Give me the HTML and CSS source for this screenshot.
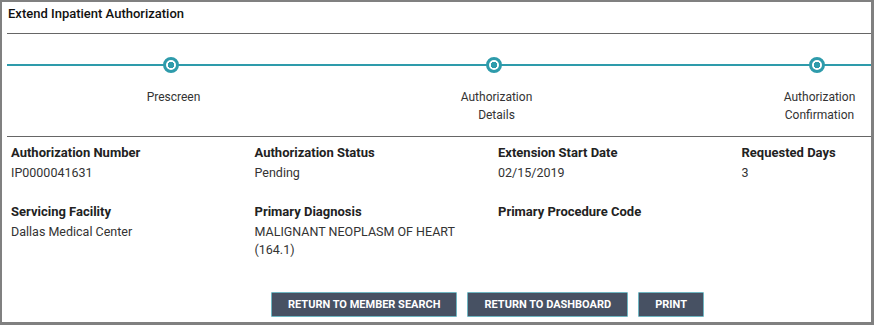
FILE: index.html
```html
<!DOCTYPE html>
<html lang="en">
<head>
    <meta charset="UTF-8">
    <meta name="viewport" content="width=device-width, initial-scale=1.0">
    <title>Extend Inpatient Authorization</title>
    <link rel="stylesheet" href="styles.css">
</head>
<body>
    <div class="frame">
        <div class="page">
            <h1 class="page-title">Extend Inpatient Authorization</h1>
            <div class="divider"></div>

            <div class="stepper">
                <div class="step">
                    <span class="step-dot"></span>
                    <div class="step-label">Prescreen</div>
                </div>
                <div class="step">
                    <span class="step-dot"></span>
                    <div class="step-label">Authorization Details</div>
                </div>
                <div class="step">
                    <span class="step-dot"></span>
                    <div class="step-label">Authorization Confirmation</div>
                </div>
            </div>

            <div class="divider"></div>

            <div class="details">
                <div class="field">
                    <div class="field-label">Authorization Number</div>
                    <div class="field-value">IP0000041631</div>
                </div>
                <div class="field">
                    <div class="field-label">Authorization Status</div>
                    <div class="field-value">Pending</div>
                </div>
                <div class="field">
                    <div class="field-label">Extension Start Date</div>
                    <div class="field-value">02/15/2019</div>
                </div>
                <div class="field">
                    <div class="field-label">Requested Days</div>
                    <div class="field-value">3</div>
                </div>
                <div class="field">
                    <div class="field-label">Servicing Facility</div>
                    <div class="field-value">Dallas Medical Center</div>
                </div>
                <div class="field">
                    <div class="field-label">Primary Diagnosis</div>
                    <div class="field-value">MALIGNANT NEOPLASM OF HEART (164.1)</div>
                </div>
                <div class="field">
                    <div class="field-label">Primary Procedure Code</div>
                    <div class="field-value"></div>
                </div>
            </div>

            <div class="button-row">
                <button class="action-btn">Return to Member Search</button>
                <button class="action-btn">Return to Dashboard</button>
                <button class="action-btn">Print</button>
            </div>
        </div>
    </div>
</body>
</html>
```

FILE: styles.css
```css
body {
    margin: 0;
    font-family: Roboto, 'Liberation Sans', sans-serif;
    color: #333;
    background: #fff;
}
.frame {
    width: 874px;
    height: 325px;
    box-sizing: border-box;
    border: 2px solid #808080;
    border-width: 2px 3px 3px 2px;
    overflow: hidden;
}
.page {
    width: 974px;
    padding-left: 5px;
}
.page-title {
    margin: 0;
    padding: 3px 0 0 1px;
    font-size: 13px;
    font-weight: 500;
    line-height: 18px;
    color: #111;
}
.divider {
    height: 1px;
    background: #666;
    margin-top: 10px;
}
.stepper {
    display: grid;
    grid-template-columns: repeat(3, 323px);
    padding: 23px 0 12px 2px;
    background: linear-gradient(#2e9bab, #2e9bab) 0 30px / 100% 2px no-repeat;
}
.stepper + .divider {
    margin-top: 0;
}
.step {
    display: flex;
    flex-direction: column;
    align-items: center;
}
.step-dot {
    width: 16px;
    height: 16px;
    box-sizing: border-box;
    border: 3px solid #2e9bab;
    border-radius: 50%;
    background: radial-gradient(circle, #2e9bab 0 3px, #fff 3.5px);
}
.step-label {
    width: 96px;
    box-sizing: border-box;
    padding-left: 6px;
    margin-top: 15px;
    text-align: center;
    font-size: 12px;
    line-height: 18px;
    color: #333;
}
.details {
    display: grid;
    grid-template-columns: repeat(4, 243.5px);
    row-gap: 21px;
    padding-top: 7px;
}
.field {
    padding-left: 4px;
}
.field-label {
    font-size: 13px;
    font-weight: 700;
    line-height: 18px;
    color: #222;
}
.field-value {
    margin-top: 2px;
    font-size: 12.5px;
    line-height: 18px;
    color: #333;
    padding-right: 20px;
}
.button-row {
    display: flex;
    justify-content: center;
    gap: 10px;
    padding-right: 13px;
    margin-top: 33px;
}
.action-btn {
    height: 25px;
    padding: 0 16px;
    background: #475163;
    color: #fff;
    border: 1px solid #6fb6c2;
    border-radius: 1px;
    font-family: Roboto, 'Liberation Sans', sans-serif;
    font-size: 11px;
    font-weight: 700;
    text-transform: uppercase;
    cursor: pointer;
}
```
